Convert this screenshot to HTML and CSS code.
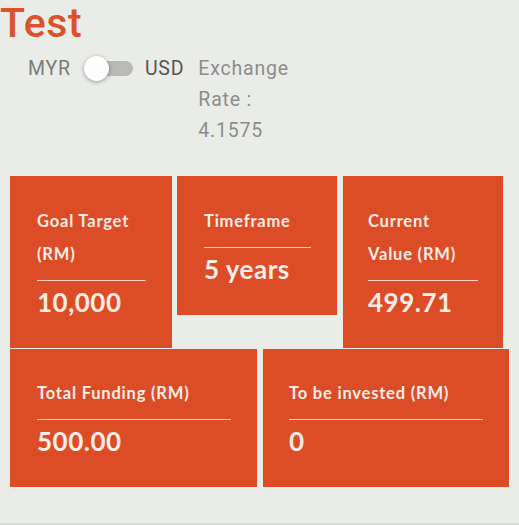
FILE: index.html
```html
<!DOCTYPE html>
<html lang="en">
<head>
<meta charset="utf-8">
<title>Test</title>
<link rel="stylesheet" href="styles.css">
</head>
<body>
<main class="page">
  <h1 class="title">Test</h1>
  <div class="currency">
    <span class="cur cur-off">MYR</span>
    <span class="switch" role="switch" aria-checked="false"><span class="track"></span><span class="knob"></span></span>
    <span class="cur cur-on">USD</span>
    <span class="rate">Exchange Rate : 4.1575</span>
  </div>
  <section class="cards">
    <div class="row row-top">
      <div class="card w1">
        <p class="label">Goal Target <span class="unit">(RM)</span></p>
        <hr class="rule">
        <p class="value">10,000</p>
      </div>
      <div class="card w2">
        <p class="label">Timeframe</p>
        <hr class="rule">
        <p class="value">5 years</p>
      </div>
      <div class="card w3">
        <p class="label">Current<br>Value <span class="unit">(RM)</span></p>
        <hr class="rule">
        <p class="value">499.71</p>
      </div>
    </div>
    <div class="row row-bottom">
      <div class="card w4">
        <p class="label">Total Funding <span class="unit">(RM)</span></p>
        <hr class="rule">
        <p class="value">500.00</p>
      </div>
      <div class="card w5">
        <p class="label">To be invested <span class="unit">(RM)</span></p>
        <hr class="rule">
        <p class="value">0</p>
      </div>
    </div>
  </section>
  <div class="footer-line"></div>
</main>
</body>
</html>
```
FILE: styles.css
```css
html, body {
  margin: 0;
  padding: 0;
  background: #eaece8;
}
.page {
  width: 519px;
  height: 525px;
  display: flex;
  flex-direction: column;
  font-family: Roboto, "Liberation Sans", sans-serif;
}
.title {
  margin: 0;
  padding: 2px 0 0 0;
  font-family: Roboto, sans-serif;
  font-weight: 500;
  font-size: 41px;
  line-height: 42px;
  color: #dc522b;
  letter-spacing: 0.6px;
}
.currency {
  display: flex;
  align-items: flex-start;
  padding-left: 28px;
  margin-top: 9px;
  font-size: 19.5px;
  letter-spacing: 0.8px;
  line-height: 31px;
}
.cur-off { color: #7b7b7b; }
.cur-on { color: #555; }
.switch {
  position: relative;
  width: 50px;
  height: 31px;
  margin: 0 11px 0 13px;
  flex: none;
}
.track {
  position: absolute;
  left: 1px;
  top: 8px;
  width: 48px;
  height: 15px;
  border-radius: 8px;
  background: #b9bab7;
}
.knob {
  position: absolute;
  left: 0;
  top: 3px;
  width: 25px;
  height: 25px;
  border-radius: 50%;
  background: #fdfdfd;
  box-shadow: 0 1px 4px rgba(0,0,0,0.35);
}
.rate {
  width: 104px;
  margin-left: 14px;
  color: #8d8d8d;
}
.cards {
  margin-top: 30px;
  padding: 0 10px;
  font-family: Lato, "Noto Sans", sans-serif;
  color: #f8ece6;
}
.row {
  display: flex;
  align-items: flex-start;
  gap: 6px;
}
.row-top .w1 { margin-right: -1px; }
.row-bottom { margin-top: 1px; }
.card {
  box-sizing: border-box;
  background: #dc4d27;
  padding: 29px 26px 31px 27px;
}
.w1 { width: 162px; }
.w2 { width: 160px; }
.w3 { width: 160px; padding-left: 25px; padding-right: 25px; }
.w4 { width: 247px; padding-top: 28px; }
.w5 { width: 246px; padding-left: 26px; padding-top: 28px; }
.label {
  margin: 0;
  font-size: 16.5px;
  font-weight: 700;
  letter-spacing: 0.8px;
  line-height: 33px;
}
.unit { font-weight: 700; }
.rule {
  margin: 9px 0 6px;
  border: 0;
  border-top: 1px solid rgba(255, 240, 232, 0.8);
  height: 0;
}
.value {
  margin: 0;
  font-size: 26px;
  font-weight: 700;
  line-height: 30px;
  letter-spacing: 0.5px;
}
.footer-line {
  margin-top: auto;
  height: 2px;
  background: #d9dbd7;
}
```
